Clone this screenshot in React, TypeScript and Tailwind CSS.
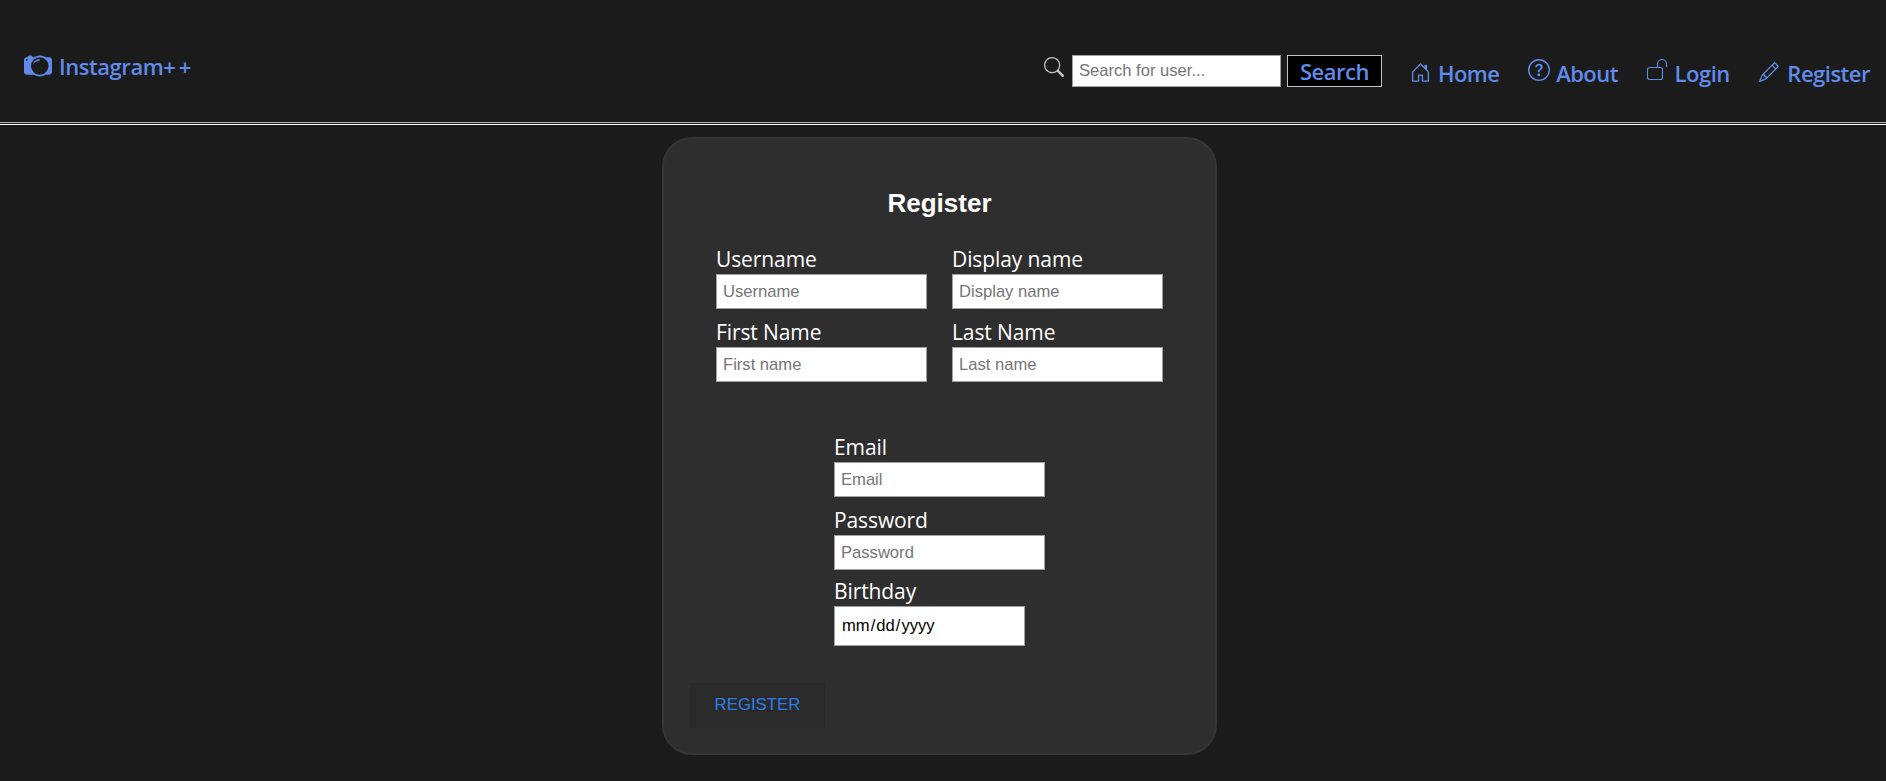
import { BsCamera2, BsHouseDoor, BsPencil, BsQuestionCircle, BsSearch } from "react-icons/bs";

const seg = "font-['Open_Sans','Noto_Sans',sans-serif]";
const arial = "font-['Liberation_Sans',Arial,sans-serif]";

function NavLink({ icon, label, gap }: { icon: React.ReactNode; label: string; gap: string }) {
  return (
    <a className={`flex items-center ${gap} text-[#5f8bea] text-[22px] font-semibold tracking-[-0.5px] leading-[30px] ${seg}`}>
      {icon}
      <span className="mt-[3px]">{label}</span>
    </a>
  );
}

function Field({ label, placeholder, type = "text", inputClass = "w-[211px] h-[35px]" }: { label: string; placeholder?: string; type?: string; inputClass?: string }) {
  return (
    <label className="block">
      <span className={`block text-white text-[21px] tracking-[-0.1px] leading-[27px] mb-[1px] ${seg}`}>{label}</span>
      <input
        type={type}
        placeholder={placeholder}
        className={`block ${inputClass} bg-white border border-[#a0a0a0] px-[6px] text-[16.6px] text-black placeholder:text-[#757575] ${arial} [&::-webkit-calendar-picker-indicator]:hidden`}
      />
    </label>
  );
}

function UnlockIcon() {
  return (
    <svg width="21" height="22" viewBox="0 0 21 22" fill="none" stroke="currentColor" strokeWidth="1.1" className="-mt-[4px]">
      <rect x="0.5" y="8.5" width="15" height="12" rx="2" />
      <path d="M10.5 8.5V5a4.5 4.5 0 0 1 9 0v3" />
    </svg>
  );
}

export default function App() {
  return (
    <div className="min-h-[781px] bg-[#1c1b1c] overflow-hidden">
      <header className="h-[122px] flex items-start justify-between pl-[24px] pr-[16px]">
        <a className={`mt-[51px] flex items-center gap-[7px] text-[#5f8bea] text-[22px] font-semibold leading-[30px] ${seg}`}>
          <BsCamera2 className="w-[28px] h-[28px]" />
          <span>
            <span className="tracking-[-0.45px]">Instagram</span>
            <span className="tracking-[3px]">++</span>
          </span>
        </a>
        <nav className="mt-[55px] flex items-start">
          <BsSearch className="w-[20px] h-[20px] mt-[2px] mr-[8px] text-[#c0c0c0]" />
          <input
            placeholder="Search for user..."
            className={`w-[209px] h-[32px] bg-white border border-[#a0a0a0] px-[6px] text-[16.6px] placeholder:text-[#757575] ${arial}`}
          />
          <button className={`ml-[6px] w-[95px] h-[32px] bg-black border border-[#c0c0c0] text-[#5f8bea] text-[22px] font-semibold tracking-[-0.5px] leading-[28px] ${seg}`}>Search</button>
          <div className="ml-[29px] flex gap-[28.6px]">
            <NavLink icon={<BsHouseDoor className="w-[21px] h-[21px] mt-[1px] -ml-[1px]" />} label="Home" gap="gap-[7px]" />
            <NavLink icon={<BsQuestionCircle className="w-[22px] h-[22px] -mt-[4px]" />} label="About" gap="gap-[6px]" />
            <NavLink icon={<UnlockIcon />} label="Login" gap="gap-[7px]" />
            <NavLink icon={<BsPencil className="w-[20px] h-[20px] ml-[1px]" />} label="Register" gap="gap-[8px]" />
          </div>
        </nav>
      </header>
      <div className="h-[2px] border-t border-[#b0b0b0]" />
      <div className="h-[1px] bg-white" />
      <main className="flex justify-center mt-[12px] pr-[7px]">
        <form className="w-[555px] h-[618px] bg-[#2f2e2f] border-2 border-[#363536] rounded-[30px] pt-[46px] flex flex-col">
          <h1 className={`text-center text-white text-[26px] font-bold leading-[36px] ${arial}`}>Register</h1>
          <div className="mt-[25px] mx-auto grid grid-cols-[211px_211px] gap-x-[25px] gap-y-[10px]">
            <Field label="Username" placeholder="Username" />
            <Field label="Display name" placeholder="Display name" />
            <Field label="First Name" placeholder="First name" />
            <Field label="Last Name" placeholder="Last name" />
          </div>
          <div className="mt-[52px] mx-auto w-[211px] flex flex-col gap-[10px]">
            <Field label="Email" placeholder="Email" />
            <Field label="Password" placeholder="Password" type="password" />
            <div className="-mt-[2px]">
              <Field label="Birthday" type="date" inputClass="w-[191px] h-[40px]" />
            </div>
          </div>
          <button type="button" className={`mt-[37px] ml-[26px] w-[135px] h-[45px] pb-[2px] bg-[#2b2a2b] text-[#2b7de9] text-[16.8px] ${arial}`}>REGISTER</button>
        </form>
      </main>
    </div>
  );
}
